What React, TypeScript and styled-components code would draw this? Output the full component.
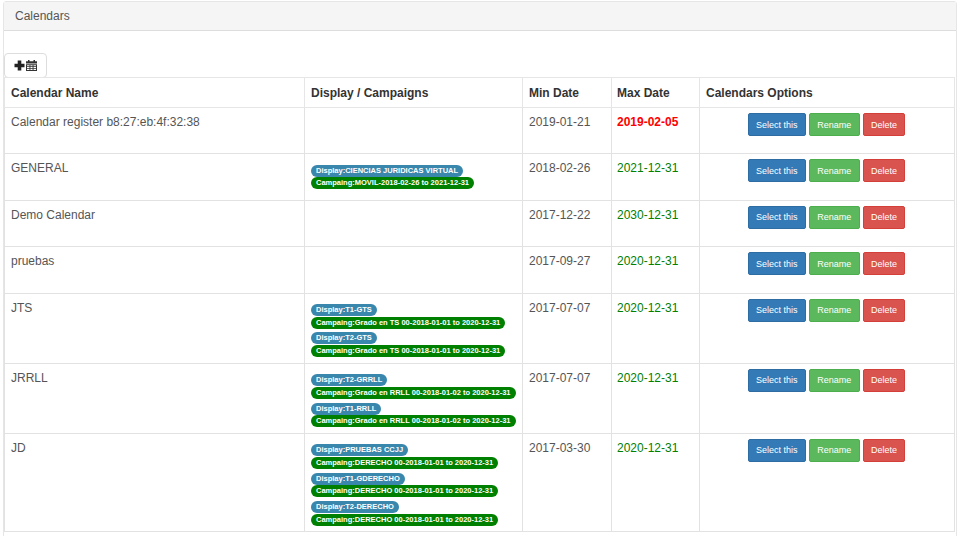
import { createGlobalStyle, styled } from "styled-components";

type Tag = { display: string; campaign: string };

type Row = {
  name: string;
  min: string;
  max: string;
  expired?: boolean;
  tags: Tag[];
};

const rows: Row[] = [
  { name: "Calendar register b8:27:eb:4f:32:38", min: "2019-01-21", max: "2019-02-05", expired: true, tags: [] },
  {
    name: "GENERAL",
    min: "2018-02-26",
    max: "2021-12-31",
    tags: [{ display: "CIENCIAS JURIDICAS VIRTUAL", campaign: "MOVIL-2018-02-26 to 2021-12-31" }],
  },
  { name: "Demo Calendar", min: "2017-12-22", max: "2030-12-31", tags: [] },
  { name: "pruebas", min: "2017-09-27", max: "2020-12-31", tags: [] },
  {
    name: "JTS",
    min: "2017-07-07",
    max: "2020-12-31",
    tags: [
      { display: "T1-GTS", campaign: "Grado en TS 00-2018-01-01 to 2020-12-31" },
      { display: "T2-GTS", campaign: "Grado en TS 00-2018-01-01 to 2020-12-31" },
    ],
  },
  {
    name: "JRRLL",
    min: "2017-07-07",
    max: "2020-12-31",
    tags: [
      { display: "T2-GRRLL", campaign: "Grado en RRLL 00-2018-01-02 to 2020-12-31" },
      { display: "T1-RRLL", campaign: "Grado en RRLL 00-2018-01-02 to 2020-12-31" },
    ],
  },
  {
    name: "JD",
    min: "2017-03-30",
    max: "2020-12-31",
    tags: [
      { display: "PRUEBAS CCJJ", campaign: "DERECHO 00-2018-01-01 to 2020-12-31" },
      { display: "T1-GDERECHO", campaign: "DERECHO 00-2018-01-01 to 2020-12-31" },
      { display: "T2-DERECHO", campaign: "DERECHO 00-2018-01-01 to 2020-12-31" },
    ],
  },
];

const App = () => {
  return (
    <>
      <GlobalStyle />
      <Panel>
        <PanelHeading>Calendars</PanelHeading>
        <PanelBody>
          <AddButton aria-label="Add calendar">
            <svg width="11" height="11" viewBox="0 0 11 11">
              <path d="M3.7 0.500h3.600v3.200h3.200v3.600H7.300v3.200H3.700V7.300H0.500V3.700h3.200z" fill="#222" />
            </svg>
            <svg width="11" height="11" viewBox="0 0 11 11">
              <path
                d="M2 0h1.500v1.200h4V0H9v1.200h2v2.400H0V1.200h2zM0 4.200h11V11H0zM1 5.200v1.100h2.500V5.200zM4.400 5.200v1.100h2.200V5.200zM7.500 5.200v1.100H10V5.200zM1 7.100v1.100h2.500V7.100zM4.400 7.100v1.100h2.200V7.100zM7.500 7.100v1.100H10V7.100zM1 9v1h2.500V9zM4.400 9v1h2.200V9zM7.500 9v1H10V9z"
                fill="#333"
                fillRule="evenodd"
              />
            </svg>
          </AddButton>
          <Table>
            <colgroup>
              <col width={300} />
              <col width={218} />
              <col width={89} />
              <col width={88} />
              <col />
            </colgroup>
            <thead>
              <tr>
                <HeadCell>Calendar Name</HeadCell>
                <HeadCell>Display / Campaigns</HeadCell>
                <HeadCell>Min Date</HeadCell>
                <MaxHeadCell>Max Date</MaxHeadCell>
                <HeadCell>Calendars Options</HeadCell>
              </tr>
            </thead>
            <tbody>
              {rows.map((row) => (
                <tr key={row.name}>
                  <Cell>{row.name}</Cell>
                  <TagCell>
                    {row.tags.map((tag) => (
                      <TagGroup key={tag.display}>
                        <Badge $tone="#3a87ad">Display:{tag.display}</Badge>
                        <Badge $tone="#008000">Campaing:{tag.campaign}</Badge>
                      </TagGroup>
                    ))}
                  </TagCell>
                  <Cell>{row.min}</Cell>
                  <MaxDate $expired={row.expired}>{row.max}</MaxDate>
                  <OptionsCell>
                    <Options>
                      <ActionButton $bg="#337ab7" $border="#2e6da4">Select this</ActionButton>
                      <ActionButton $bg="#5cb85c" $border="#4cae4c">Rename</ActionButton>
                      <ActionButton $bg="#d9534f" $border="#d43f3a">Delete</ActionButton>
                    </Options>
                  </OptionsCell>
                </tr>
              ))}
            </tbody>
          </Table>
        </PanelBody>
      </Panel>
    </>
  );
};

export default App;

const GlobalStyle = createGlobalStyle`
  html, body {
    margin: 0;
    height: 536px;
    overflow: hidden;
    background: #ffffff;
  }

  body {
    font-family: "Liberation Sans", Arial, sans-serif;
    font-size: 12px;
    line-height: 17px;
    color: #333333;
  }
`;

const Panel = styled.section`
  width: 954px;
  min-height: 560px;
  margin: 1px 0 0 3px;
  box-sizing: border-box;
  border: 1px solid #e6e6e6;
  border-radius: 3px;
`;

const PanelHeading = styled.div`
  height: 28px;
  padding: 0 11px;
  display: flex;
  align-items: center;
  background: #f5f5f5;
  border-bottom: 1px solid #dddddd;
  color: #555555;
`;

const PanelBody = styled.div`
  padding: 22px 0 0 0;
`;

const AddButton = styled.button`
  display: flex;
  align-items: center;
  justify-content: center;
  gap: 1px;
  width: 43px;
  height: 25px;
  margin-bottom: -1px;
  padding: 0;
  background: #ffffff;
  border: 1px solid #dddddd;
  border-radius: 4px;
`;

const Table = styled.table`
  width: 951px;
  table-layout: fixed;
  border-collapse: collapse;
  border: 1px solid #dddddd;
`;

const HeadCell = styled.th`
  box-sizing: border-box;
  height: 30px;
  padding: 1px 6px 0;
  text-align: left;
  font-weight: 700;
  border: 1px solid #e6e6e6;
`;

const MaxHeadCell = styled(HeadCell)`
  padding-left: 5px;
`;

const Cell = styled.td`
  box-sizing: border-box;
  padding: 6px;
  vertical-align: top;
  border: 1px solid #e2e2e2;
  color: #555555;
`;

const TagCell = styled(Cell)`
  padding: 10.5px 6px 1.8px;
  height: 46.4px;
`;

const MaxDate = styled(Cell)<{ $expired?: boolean }>`
  padding-left: 5px;
  color: ${(p) => (p.$expired ? "#ff0000" : "#008000")};
  font-weight: ${(p) => (p.$expired ? 700 : 400)};
`;

const OptionsCell = styled(Cell)`
  padding-top: 5px;
`;

const Options = styled.div`
  display: flex;
  justify-content: center;
  gap: 3.2px;
  padding-right: 1px;
`;

const ActionButton = styled.button<{ $bg: string; $border: string }>`
  height: 23px;
  padding: 0 7.3px;
  font-family: inherit;
  font-size: 9px;
  color: #ffffff;
  background: ${(p) => p.$bg};
  border: 1px solid ${(p) => p.$border};
  border-radius: 2px;
`;

const TagGroup = styled.div`
  display: flex;
  flex-direction: column;
  align-items: flex-start;
  gap: 0.6px;
  margin-bottom: 3.8px;
`;

const Badge = styled.span<{ $tone: string }>`
  display: inline-block;
  height: 12px;
  padding: 0 5px;
  font-size: 7.5px;
  line-height: 12px;
  font-weight: 700;
  white-space: nowrap;
  color: #ffffff;
  background: ${(p) => p.$tone};
  border-radius: 6px;
`;
